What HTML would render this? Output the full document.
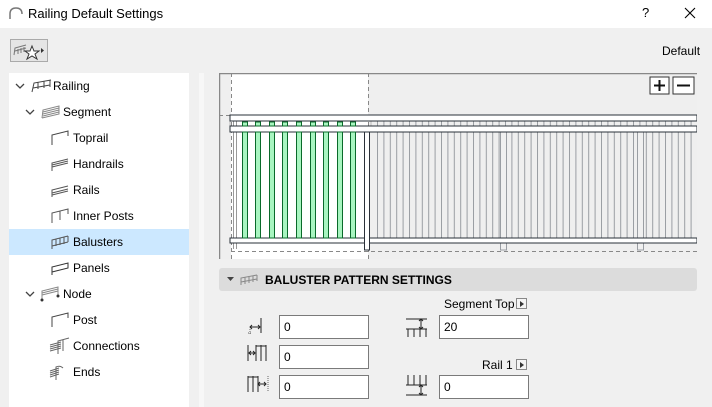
<!DOCTYPE html>
<html><head><meta charset="utf-8"><style>
*{margin:0;padding:0;box-sizing:border-box}
body{width:712px;height:407px;background:#f0f0f0;font-family:"Liberation Sans",sans-serif;font-size:12px;color:#000;position:relative;overflow:hidden}
.abs{position:absolute}
.title{left:0;top:0;width:712px;height:28px;background:#fff}
.tree{left:9px;top:73px;width:180px;height:334px;background:#fff}
.row{position:absolute;left:0;width:180px;height:26px;line-height:26px;font-size:12px}
.sel{background:#cce8ff}
.inp{position:absolute;width:90px;height:24px;background:#fff;border:1px solid #7a7a7a;padding-left:4px;line-height:22px;font-size:12px}
.arrbox{position:absolute;width:11px;height:11px;border:1px solid #888;background:#f4f4f4}
.arrbox:after{content:"";position:absolute;left:3px;top:2px;border-left:4px solid #333;border-top:3px solid transparent;border-bottom:3px solid transparent}
</style></head><body>
<div class="abs title"></div>
<svg class="abs" style="left:8px;top:5px" width="16" height="16"><path d="M2 14 V9 Q2 3 8 3 Q14 3 14 9" fill="none" stroke="#777" stroke-width="1.5"/></svg>
<div class="abs" style="left:28px;top:6px;font-size:13px">Railing Default Settings</div>
<div class="abs" style="left:642px;top:5px;font-size:13px">?</div>
<svg class="abs" style="left:684px;top:7px" width="12" height="12"><path d="M1 1L11 11M11 1L1 11" stroke="#000" stroke-width="1.1"/></svg>

<div class="abs" style="left:10px;top:39px;width:38px;height:23px;border:1px solid #aaa;background:#e5e5e5"></div>
<svg class="abs" style="left:12px;top:41px" width="34" height="20"><path d="M2 14 L3 7 L14 4 M3 10 L14 7 M6 8 V13 M9 7 V12 M12 6 V11" stroke="#777" fill="none"/><path d="M20 5 L22 10 L27 10 L23 13 L25 18 L20 15 L15 18 L17 13 L13 10 L18 10 Z" fill="#fff" stroke="#333"/><path d="M29 7 L32 9.5 L29 12Z" fill="#333"/></svg>
<div class="abs" style="left:662px;top:44px;font-size:12px">Default</div>

<div class="abs" style="left:199px;top:73px;width:5px;height:334px;background:#f7f7f7"></div>
<div class="abs tree">
 <div class="row" style="top:0"><svg class="abs" style="left:6px;top:9px" width="10" height="8"><path d="M1 2L5 6L9 2" stroke="#444" fill="none" stroke-width="1.3"/></svg><svg class="abs" style="left:22px;top:6px" width="22" height="14"><path d="M1 13L3 4L20 1M2 9L19 6M7 3V10M13 2V9M19 1V8" stroke="#444" fill="none"/></svg><span class="abs" style="left:44px">Railing</span></div>
 <div class="row" style="top:26px"><svg class="abs" style="left:16px;top:9px" width="10" height="8"><path d="M1 2L5 6L9 2" stroke="#444" fill="none" stroke-width="1.3"/></svg><svg class="abs" style="left:32px;top:6px" width="20" height="14"><path d="M1 13L2 5L18 1V9L1 13M2 7L18 3M2 9L18 5M2 11L18 7" stroke="#888" fill="none"/></svg><span class="abs" style="left:54px">Segment</span></div>
 <div class="row" style="top:52px"><svg class="abs" style="left:42px;top:5px" width="20" height="16"><path d="M1 15V5L17 1V6" stroke="#444" fill="none"/></svg><span class="abs" style="left:64px">Toprail</span></div>
 <div class="row" style="top:78px"><svg class="abs" style="left:42px;top:5px" width="20" height="16"><path d="M1 15V7L17 3M1 9L17 5M1 11L17 7" stroke="#555" fill="none"/></svg><span class="abs" style="left:64px">Handrails</span></div>
 <div class="row" style="top:104px"><svg class="abs" style="left:42px;top:5px" width="20" height="16"><path d="M1 15V8L17 4M1 11L17 7M1 13L17 9" stroke="#555" fill="none"/></svg><span class="abs" style="left:64px">Rails</span></div>
 <div class="row" style="top:130px"><svg class="abs" style="left:42px;top:5px" width="20" height="16"><path d="M1 15V5L17 1V6M9 3V12" stroke="#555" fill="none"/></svg><span class="abs" style="left:64px">Inner Posts</span></div>
 <div class="row sel" style="top:156px"><svg class="abs" style="left:42px;top:5px" width="20" height="16"><path d="M1 15V6L17 2M1 12L17 8M5 5V12M9 4V11M13 3V10M17 2V8" stroke="#555" fill="none"/></svg><span class="abs" style="left:64px">Balusters</span></div>
 <div class="row" style="top:182px"><svg class="abs" style="left:42px;top:5px" width="20" height="16"><path d="M1 15V7L17 3V8L1 12" stroke="#333" fill="none"/></svg><span class="abs" style="left:64px">Panels</span></div>
 <div class="row" style="top:208px"><svg class="abs" style="left:16px;top:9px" width="10" height="8"><path d="M1 2L5 6L9 2" stroke="#444" fill="none" stroke-width="1.3"/></svg><svg class="abs" style="left:30px;top:4px" width="22" height="18"><path d="M3 15V6L19 2V11M3 8L19 4M3 10L19 6" stroke="#888" fill="none"/><circle cx="3" cy="15" r="1.5" fill="#333"/><circle cx="19" cy="11" r="1.5" fill="#333"/></svg><span class="abs" style="left:54px">Node</span></div>
 <div class="row" style="top:234px"><svg class="abs" style="left:42px;top:5px" width="20" height="16"><path d="M1 15V5L17 1V6" stroke="#444" fill="none"/></svg><span class="abs" style="left:64px">Post</span></div>
 <div class="row" style="top:260px"><svg class="abs" style="left:40px;top:4px" width="22" height="18"><path d="M1 8L12 5M1 10L12 7M1 12L12 9M1 14L12 11M9 17V4L20 1M14 14V3" stroke="#666" fill="none"/></svg><span class="abs" style="left:64px">Connections</span></div>
 <div class="row" style="top:286px"><svg class="abs" style="left:40px;top:4px" width="22" height="18"><path d="M1 8L10 5M1 10L10 7M1 12L10 9M1 14L10 11M7 17V4Q11 2 14 5" stroke="#666" fill="none"/></svg><span class="abs" style="left:64px">Ends</span></div>
</div>

<svg class="abs" style="left:219px;top:73px" width="478" height="186">
 <defs><pattern id="gb" x="158" y="0" width="6.4" height="10" patternUnits="userSpaceOnUse"><rect x="0" y="0" width="1" height="10" fill="#9a9ea3"/></pattern></defs>
 <rect x="0" y="0" width="478" height="186" fill="#efefef"/>
 <rect x="12" y="0" width="137" height="186" fill="#fff"/>
 <path d="M0.5 0V186M0 0.5H478" stroke="#888" stroke-width="1.5"/>
 <path d="M12.5 0V186M149.5 0V186M0 42.5H12M12 178.5H478" stroke="#888" stroke-dasharray="4 3"/>
 <rect x="156" y="48" width="322" height="117" fill="url(#gb)"/>
 <rect x="281.5" y="59" width="6" height="118" fill="#f0f0f0" stroke="#9a9ea3"/>
 <rect x="418.5" y="59" width="6" height="118" fill="#f0f0f0" stroke="#9a9ea3"/>
 <path d="M14.5 44V176M17.5 44V176" stroke="#999"/>
 <rect x="11" y="42" width="467" height="6" fill="#fff" stroke="#2a3038"/>
 <path d="M11 48.5V53M152 48.5V53" stroke="#bbb"/>
 <rect x="11" y="53" width="467" height="6" fill="#fff" stroke="#2a3038"/>
 <rect x="11" y="165" width="467" height="5" fill="#fff" stroke="#2a3038"/>
 <g fill="#a8f5c0" stroke="#0a6a2a">
  <rect x="23.5" y="59" width="5" height="106"/><rect x="36.5" y="59" width="5" height="106"/><rect x="50.5" y="59" width="5" height="106"/><rect x="63.5" y="59" width="5" height="106"/><rect x="77.5" y="59" width="5" height="106"/><rect x="91.5" y="59" width="5" height="106"/><rect x="104.5" y="59" width="5" height="106"/><rect x="118.5" y="59" width="5" height="106"/><rect x="131.5" y="59" width="5" height="106"/>
  <rect x="23.5" y="49" width="5" height="4"/><rect x="36.5" y="49" width="5" height="4"/><rect x="50.5" y="49" width="5" height="4"/><rect x="63.5" y="49" width="5" height="4"/><rect x="77.5" y="49" width="5" height="4"/><rect x="91.5" y="49" width="5" height="4"/><rect x="104.5" y="49" width="5" height="4"/><rect x="118.5" y="49" width="5" height="4"/><rect x="131.5" y="49" width="5" height="4"/>
 </g>
 <rect x="145.5" y="59" width="5" height="118" fill="#fff" stroke="#2a3038"/>
 <rect x="431" y="4" width="19" height="17" fill="#fff" stroke="#333"/><path d="M435 12.5H446M440.5 7V18" stroke="#111" stroke-width="2"/>
 <rect x="454" y="4" width="21" height="17" fill="#fff" stroke="#333"/><path d="M458 12.5H471" stroke="#111" stroke-width="2"/>
</svg>

<div class="abs" style="left:219px;top:268px;width:478px;height:23px;background:#dcdcdc;border-radius:3px"></div>
<svg class="abs" style="left:226px;top:274px" width="40" height="12"><path d="M1 3L8 3L4.5 7Z" fill="#444"/><path d="M15 11V4L31 1M15 8L31 5M19 3V10M23 2V9M27 2V8M31 1V7" stroke="#888" fill="none"/></svg>
<div class="abs" style="left:265px;top:273px;font-weight:bold;font-size:12px">BALUSTER PATTERN SETTINGS</div>

<div class="abs" style="left:444px;top:297px;font-size:12px">Segment Top</div><div class="arrbox" style="left:516px;top:298px"></div>
<div class="abs" style="left:482px;top:358px;font-size:12px">Rail 1</div><div class="arrbox" style="left:516px;top:359px"></div>

<svg class="abs" style="left:246px;top:315px" width="30" height="90"><path d="M15 3V18M4 12H14M6 10L4 12L6 14M12 10L14 12L12 14" stroke="#222" fill="none"/><path d="M4 14V20M2 18H6" stroke="#666" stroke-dasharray="1 1"/>
<path d="M2 30V46M3 38H9M5 36L3 38L5 40M7 36L9 38L7 40M10 30V46M15 30V46M20 30V46M10 31H20" stroke="#222" fill="none"/>
<path d="M2 61V77M7 61V77M12 61V77M2 62H12M12 69H20M14 67L12 69L14 71M18 67L20 69L18 71" stroke="#222" fill="none"/><path d="M22 61V77" stroke="#666" stroke-dasharray="1 1"/></svg>
<svg class="abs" style="left:405px;top:315px" width="30" height="90"><path d="M1 4H22M1 14H22M3 14V22M9 14V22M15 14V22M21 14V22M16 4V14M14 6L16 4L18 6M14 12L16 14L18 12" stroke="#222" fill="none"/>
<path d="M3 60V70M9 60V70M15 60V70M21 60V70M1 70H22M1 80H22M16 70V80M14 72L16 70L18 72M14 78L16 80L18 78" stroke="#222" fill="none"/></svg>

<div class="inp" style="left:279px;top:315px">0</div>
<div class="inp" style="left:279px;top:345px">0</div>
<div class="inp" style="left:279px;top:375px">0</div>
<div class="inp" style="left:439px;top:315px">20</div>
<div class="inp" style="left:439px;top:375px">0</div>
</body></html>
